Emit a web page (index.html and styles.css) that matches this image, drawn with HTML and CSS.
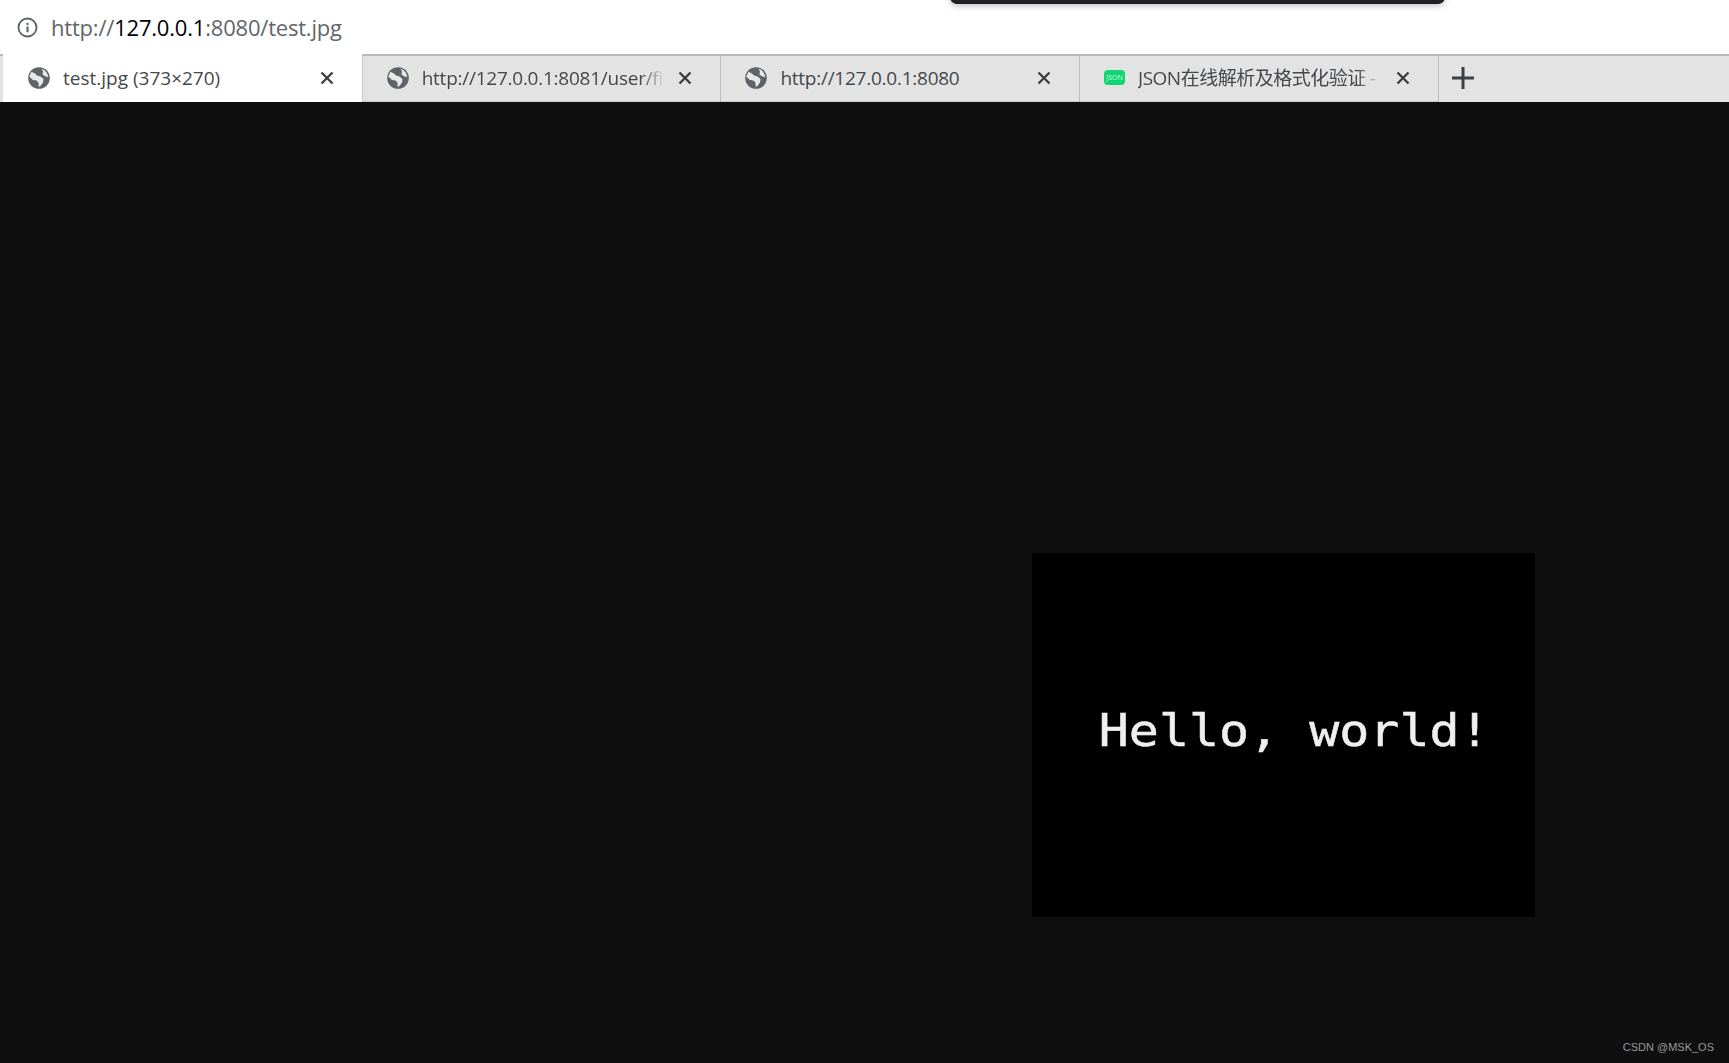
FILE: index.html
```html
<!DOCTYPE html>
<html lang="en">
<head>
<meta charset="utf-8">
<title>test.jpg (373×270)</title>
<link rel="stylesheet" href="styles.css">
</head>
<body>
<div class="toast"></div>
<header class="address">
  <svg class="info" viewBox="0 0 20 20"><circle cx="10" cy="10" r="8.6" fill="none" stroke="#5f6368" stroke-width="1.8"/><rect x="9" y="9" width="2" height="5.5" fill="#5f6368"/><rect x="9" y="5.6" width="2" height="2" fill="#5f6368"/></svg>
  <div class="url">http://<span class="host">127.0.0.1</span>:8080/test.jpg</div>
</header>
<nav class="tabs">
  <div class="tab active">
    <svg class="favicon" viewBox="0 0 22 22"><use href="#globe"/></svg>
    <span class="title">test.jpg (373×270)</span>
    <svg class="close" viewBox="0 0 14 14"><path d="M1.5 1.5 12.5 12.5M12.5 1.5 1.5 12.5"/></svg>
  </div>
  <div class="tab">
    <svg class="favicon" viewBox="0 0 22 22"><use href="#globe"/></svg>
    <span class="title fade">http://127.0.0.1:8081/user/file</span>
    <svg class="close" viewBox="0 0 14 14"><path d="M1.5 1.5 12.5 12.5M12.5 1.5 1.5 12.5"/></svg>
  </div>
  <div class="tab">
    <svg class="favicon" viewBox="0 0 22 22"><use href="#globe"/></svg>
    <span class="title">http://127.0.0.1:8080</span>
    <svg class="close" viewBox="0 0 14 14"><path d="M1.5 1.5 12.5 12.5M12.5 1.5 1.5 12.5"/></svg>
  </div>
  <div class="tab">
    <span class="json"><span class="json-text">JSON</span></span>
    <span class="title fade cjk">JSON在线解析及格式化验证 - JSON.cn</span>
    <svg class="close" viewBox="0 0 14 14"><path d="M1.5 1.5 12.5 12.5M12.5 1.5 1.5 12.5"/></svg>
  </div>
  <svg class="plus" viewBox="0 0 22 22"><path d="M11 0V22M0 11H22"/></svg>
</nav>
<main class="viewer">
  <div class="picture"><span class="hello">Hello, world!</span></div>
  <span class="mark">CSDN @MSK_OS</span>
</main>
<svg class="defs" width="0" height="0">
  <symbol id="globe" viewBox="0 0 22 22">
    <circle cx="11" cy="11" r="10.8" fill="#5f6368"/>
    <path fill="#e8e8e8" d="M1.2 9.500 3.500 4.800 7 6.500 9 8.500 12.500 9.500 15.500 12 15 15.500 12 19.500 10.600 19.500 10.500 15.800 8.500 13.500 5 13z"/>
    <path fill="#e8e8e8" d="M13.500 1.800C16.500 2.600 19.500 5.500 20.300 10L17.500 9.500 14.500 7.500 15 4.500z"/>
  </symbol>
</svg>
</body>
</html>
```
FILE: styles.css
```css
* { box-sizing: border-box; }
html, body { margin: 0; height: 100%; }
body {
  display: flex;
  flex-direction: column;
  height: 1063px;
  overflow: hidden;
  background: #0f0f0f;
  font-family: "Open Sans", "Noto Sans CJK SC", sans-serif;
}
.address {
  height: 54px;
  flex: none;
  display: flex;
  align-items: center;
  gap: 13px;
  padding-left: 17px;
  background: #fff;
}
.info { width: 21px; height: 21px; flex: none; }
.url { font-size: 22px; color: #636669; letter-spacing: -0.2px; }
.host { color: #000; }
.toast {
  position: absolute;
  left: 950px;
  top: -10px;
  width: 495px;
  height: 14px;
  background: #202124;
  border-radius: 8px;
  box-shadow: 0 2px 6px rgba(0, 0, 0, .25);
  z-index: 2;
}
.tabs {
  height: 48px;
  flex: none;
  display: flex;
  align-items: stretch;
  background: #e3e3e3;
  border-top: 2px solid #b9b9b9;
  padding-left: 3px;
}
.tab {
  width: 358.7px;
  display: flex;
  align-items: center;
  padding: 0 28px 2px 24px;
  border-right: 1px solid #bdbdbd;
  border-bottom: 1px solid #c9c9c9;
}
.tab.active {
  width: 359.7px;
  background: #fff;
  margin-top: -2px;
  padding: 0 28px 0 25px;
  border-bottom: 0;
  border-right: 1px solid #c9c9c9;
}
.favicon { width: 22px; height: 22px; flex: none; }
.json {
  width: 21px;
  height: 15px;
  flex: none;
  display: flex;
  align-items: center;
  justify-content: center;
  background: #0fd572;
  border-radius: 4px;
  overflow: hidden;
}
.json-text { font-size: 7px; color: #d8f8e8; }
.title {
  width: 238px;
  flex: none;
  margin-left: 13px;
  font-size: 19px;
  line-height: 26px;
  height: 26px;
  color: #45484b;
  white-space: nowrap;
  overflow: hidden;
  letter-spacing: -0.25px;
}
.active .title { letter-spacing: 0; }
.title.fade {
  width: 243px;
  flex: none;
  -webkit-mask-image: linear-gradient(to right, #000 90%, transparent 100%);
  mask-image: linear-gradient(to right, #000 90%, transparent 100%);
}
.title.cjk { letter-spacing: -0.5px; }
.close {
  width: 14px;
  height: 14px;
  flex: none;
  margin-left: auto;
  fill: none;
  stroke: #3c4043;
  stroke-width: 2.4;
}
.plus {
  width: 22px;
  height: 22px;
  flex: none;
  align-self: center;
  margin: -3px 0 0 13px;
  fill: none;
  stroke: #3c4043;
  stroke-width: 3;
}
.viewer {
  flex: 1;
  position: relative;
  display: flex;
  justify-content: flex-end;
  align-items: flex-start;
  padding: 451px 194px 0 0;
}
.picture {
  width: 503px;
  height: 364px;
  background: #000;
  display: flex;
  align-items: center;
  justify-content: center;
  padding: 0 0 10px 22px;
}
.hello {
  font-family: "DejaVu Sans Mono", monospace;
  font-size: 44px;
  transform: scaleX(1.135);
  color: #efefef;
  -webkit-text-stroke: 0.5px #efefef;
  white-space: pre;
}
.mark {
  position: absolute;
  right: 15px;
  bottom: 10px;
  font-family: "Liberation Sans", sans-serif;
  font-size: 11px;
  color: #999;
}
.defs { position: absolute; }
```
